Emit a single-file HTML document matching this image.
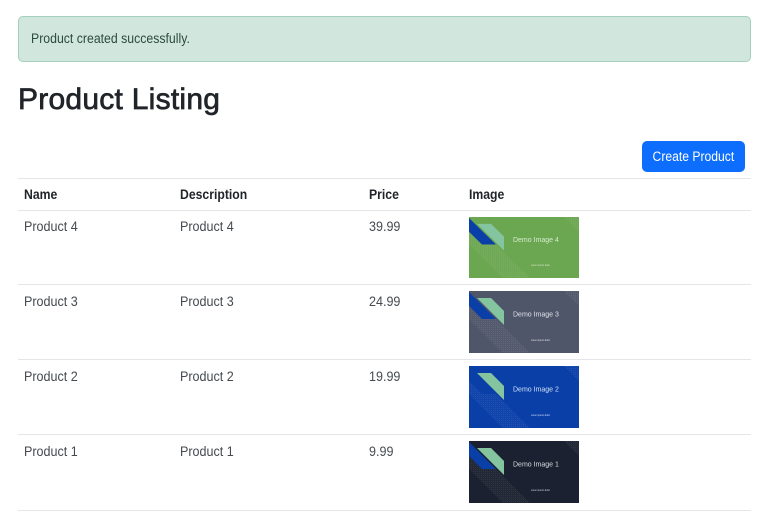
<!DOCTYPE html>
<html lang="en">
<head>
<meta charset="utf-8">
<title>Product Listing</title>
<style>
html,body{margin:0;padding:0;background:#fff;width:768px;height:530px;overflow:hidden}
body{position:relative;font-family:"Liberation Sans",sans-serif;color:#212529;font-size:13.5px}
.abs{position:absolute;white-space:nowrap;line-height:18px;transform-origin:left center;transform:scaleX(.93)}
.alert{position:absolute;left:18px;top:16px;width:731px;height:44px;background:#d1e7dd;border:1px solid #a3cfbb;border-radius:5px}
.line{position:absolute;left:18px;width:733px;height:1px;background:#e4e6e9}
.btn{position:absolute;left:642px;top:141px;width:103px;height:31px;background:#0d6efd;color:#fff;border-radius:5px;text-align:center;line-height:31px;font-size:13.5px}
.btn span{display:inline-block;transform:scaleX(.9)}
.abs.th{font-weight:bold;color:#212529;transform:scaleX(.905)}
.td{color:#454a4f}
svg.t{position:absolute;left:469px;width:110px;height:62px;display:block;filter:blur(.35px)}
</style>
</head>
<body>
<svg width="0" height="0" style="position:absolute;left:0;top:0;height:0;width:0">
<defs>
<pattern id="d" width="2" height="2" patternUnits="userSpaceOnUse"><rect width="2" height="2" fill="#fff" fill-opacity=".03"/><rect width="1" height="1" fill="#fff" fill-opacity=".06"/></pattern>
</defs>
</svg>

<div class="alert"></div>
<div class="abs" style="left:31px;top:30px;color:#2d4a40;transform:scaleX(.91)">Product created successfully.</div>

<div class="abs" style="left:18px;top:81px;font-size:30px;line-height:38px;font-weight:500;letter-spacing:.25px;-webkit-text-stroke:.7px #212529;transform:none">Product Listing</div>

<div class="btn"><span>Create Product</span></div>

<div class="line" style="top:178px"></div>
<div class="line" style="top:210px"></div>
<div class="line" style="top:284px"></div>
<div class="line" style="top:359px"></div>
<div class="line" style="top:434px"></div>
<div class="line" style="top:510px"></div>

<div class="abs th" style="left:24px;top:186px">Name</div>
<div class="abs th" style="left:180px;top:186px">Description</div>
<div class="abs th" style="left:369px;top:186px">Price</div>
<div class="abs th" style="left:469px;top:186px">Image</div>

<div class="abs td" style="left:24px;top:218px">Product 4</div>
<div class="abs td" style="left:180px;top:218px">Product 4</div>
<div class="abs td" style="left:369px;top:218px">39.99</div>
<svg class="t" style="top:217px;height:61px" viewBox="0 0 110 62" preserveAspectRatio="none">
<rect width="110" height="62" fill="#6ba650"/>
<path d="M0 15L13 28H27L61 62H34L0 28Z" fill="url(#d)"/>
<path d="M95 0H110V15Z" fill="url(#d)"/>
<path d="M0 1L27 28H13L0 15Z" fill="#0a3fa8"/>
<path d="M8 7H22L35 20V34Z" fill="#84c5a0"/>
<text x="44" y="25.5" font-family="Liberation Sans,sans-serif" font-size="7" fill="#d5ecd0">Demo Image 4</text>
<text x="62" y="50" font-family="Liberation Sans,sans-serif" font-size="2.3" fill="#cfe8c8">Lorem ipsum dolor</text>
</svg>

<div class="abs td" style="left:24px;top:293px">Product 3</div>
<div class="abs td" style="left:180px;top:293px">Product 3</div>
<div class="abs td" style="left:369px;top:293px">24.99</div>
<svg class="t" style="top:291px" viewBox="0 0 110 62">
<rect width="110" height="62" fill="#50566a"/>
<path d="M0 15L13 28H27L61 62H34L0 28Z" fill="url(#d)"/>
<path d="M95 0H110V15Z" fill="url(#d)"/>
<path d="M0 1L27 28H13L0 15Z" fill="#0a3fa8"/>
<path d="M8 7H22L35 20V34Z" fill="#84c5a0"/>
<text x="44" y="25.5" font-family="Liberation Sans,sans-serif" font-size="7" fill="#dfe2e8">Demo Image 3</text>
<text x="62" y="50" font-family="Liberation Sans,sans-serif" font-size="2.3" fill="#dfe2e8">Lorem ipsum dolor</text>
</svg>

<div class="abs td" style="left:24px;top:368px">Product 2</div>
<div class="abs td" style="left:180px;top:368px">Product 2</div>
<div class="abs td" style="left:369px;top:368px">19.99</div>
<svg class="t" style="top:366px" viewBox="0 0 110 62">
<rect width="110" height="62" fill="#0a3fa8"/>
<path d="M0 15L13 28H27L61 62H34L0 28Z" fill="url(#d)"/>
<path d="M95 0H110V15Z" fill="url(#d)"/>
<path d="M8 7H22L35 20V34Z" fill="#84c5a0"/>
<text x="44" y="25.5" font-family="Liberation Sans,sans-serif" font-size="7" fill="#cfe0f5">Demo Image 2</text>
<text x="62" y="50" font-family="Liberation Sans,sans-serif" font-size="2.3" fill="#cfe0f5">Lorem ipsum dolor</text>
</svg>

<div class="abs td" style="left:24px;top:443px">Product 1</div>
<div class="abs td" style="left:180px;top:443px">Product 1</div>
<div class="abs td" style="left:369px;top:443px">9.99</div>
<svg class="t" style="top:441px" viewBox="0 0 110 62">
<rect width="110" height="62" fill="#1b2130"/>
<path d="M0 15L13 28H27L61 62H34L0 28Z" fill="url(#d)"/>
<path d="M95 0H110V15Z" fill="url(#d)"/>
<path d="M0 1L27 28H13L0 15Z" fill="#0a3fa8"/>
<path d="M8 7H22L35 20V34Z" fill="#84c5a0"/>
<text x="44" y="25.5" font-family="Liberation Sans,sans-serif" font-size="7" fill="#d8dbe2">Demo Image 1</text>
<text x="62" y="50" font-family="Liberation Sans,sans-serif" font-size="2.3" fill="#d8dbe2">Lorem ipsum dolor</text>
</svg>
</body>
</html>
